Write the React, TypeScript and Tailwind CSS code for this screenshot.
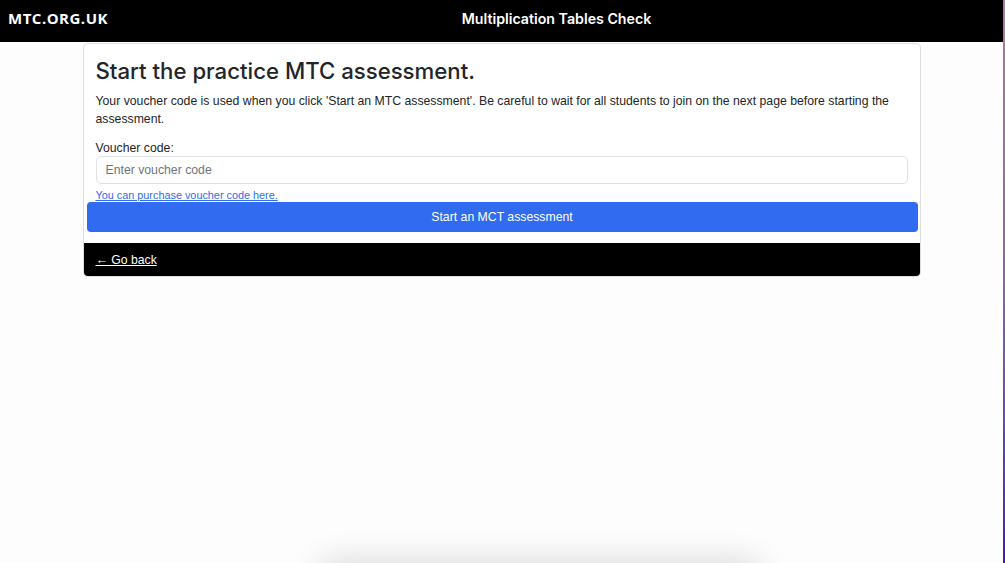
import React from "react";

export default function App() {
  return (
    <div className="relative w-[1005px] h-[563px] overflow-hidden bg-[#fdfdfd] font-['Liberation_Sans',Arial,sans-serif] text-[#212529]">
      <div className="flex h-full">
        <div className="flex-1 flex flex-col">
          <header className="h-[42px] bg-black flex items-center px-[8px] pb-[5px] relative">
            <div className="text-white font-['Open_Sans',sans-serif] font-bold text-[15px] tracking-[0.5px]">MTC.ORG.UK</div>
            <div className="absolute left-0 right-0 top-[8px] text-center pl-[110px] text-white text-[14.2px] font-['Inter',sans-serif] font-semibold pointer-events-none">
              Multiplication Tables Check
            </div>
          </header>
          <main className="flex justify-center pt-px">
            <div className="w-[838px] border border-[#dedede] rounded-[5px] bg-white overflow-hidden">
              <div className="px-[12px] pt-[12px] pb-[11px]">
                <h1 className="text-[22.2px] font-['Inter',sans-serif] font-medium leading-[30px] text-[#212529]">Start the practice MTC assessment.</h1>
                <p className="mt-[6px] text-[12.25px] leading-[18px]">
                  Your voucher code is used when you click 'Start an MTC assessment'. Be careful to wait for all students to join on the next page before starting the assessment.
                </p>
                <label className="block mt-[11px] text-[12.25px] leading-[18px]">Voucher code:</label>
                <input
                  className="block -mt-px w-full h-[28px] border border-[#dee2e6] rounded-[5px] px-[9px] text-[12.25px] placeholder:text-[#6c757d] outline-none"
                  placeholder="Enter voucher code"
                />
                <a href="#" className="block mt-[4px] text-[10.85px] leading-[14px] text-[#2f6bf0] underline">
                  You can purchase voucher code here.
                </a>
                <button className="block -mx-[9px] mt-0 w-[831px] h-[30px] rounded-[4px] bg-[#306bf0] text-white text-[12.25px]">
                  Start an MCT assessment
                </button>
              </div>
              <div className="bg-black h-[33px] flex items-center px-[12px] pt-[2px]">
                <a href="#" className="text-white text-[12.25px] underline">← Go back</a>
              </div>
            </div>
          </main>
        </div>
        <div className="w-[2px] h-full bg-gradient-to-b from-[#b07aa0] via-[#9060a8] to-[#4a10c0]" />
      </div>
      <div className="absolute left-[330px] w-[420px] top-[572px] h-[20px] rounded-full shadow-[0_0_30px_14px_rgba(0,0,0,0.13)]" />
    </div>
  );
}
